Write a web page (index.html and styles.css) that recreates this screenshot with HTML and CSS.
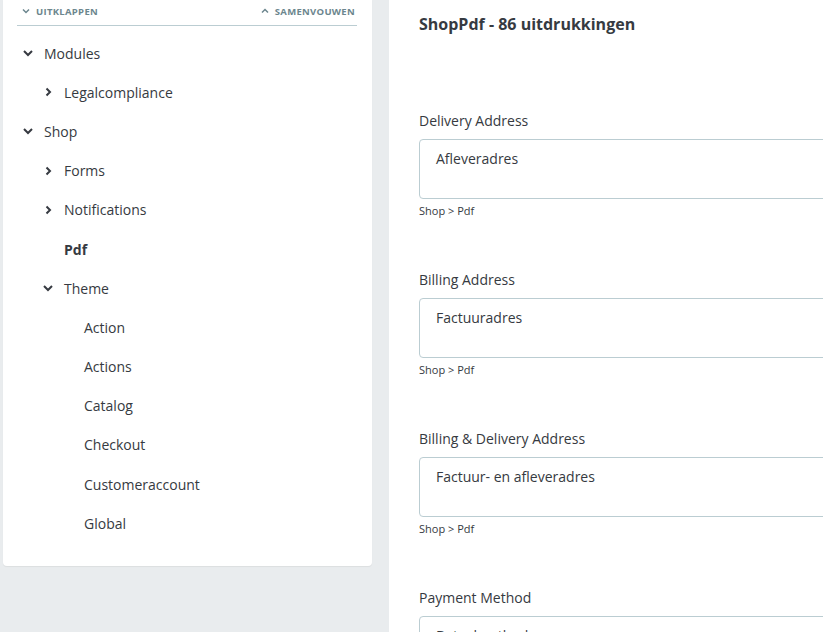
FILE: index.html
```html
<!DOCTYPE html>
<html lang="nl">
<head>
<meta charset="utf-8">
<title>Vertalingen</title>
<link rel="stylesheet" href="styles.css">
</head>
<body>
<div class="layout">
  <aside class="side">
    <div class="side-head">
      <span class="head-btn"><svg class="head-ico" viewBox="0 0 10 10"><path d="M2 3.5 L5 6.5 L8 3.5" /></svg>Uitklappen</span>
      <span class="head-btn"><svg class="head-ico" viewBox="0 0 10 10"><path d="M2 6.5 L5 3.5 L8 6.5" /></svg>Samenvouwen</span>
    </div>
    <ul class="tree">
      <li class="node lvl0"><svg class="chev" viewBox="0 0 16 16"><path d="M4 6 L8 10 L12 6"/></svg><span>Modules</span></li>
      <li class="node lvl1"><svg class="chev" viewBox="0 0 16 16"><path d="M6.5 4.5 L10 8 L6.5 11.5"/></svg><span>Legalcompliance</span></li>
      <li class="node lvl0"><svg class="chev" viewBox="0 0 16 16"><path d="M4 6 L8 10 L12 6"/></svg><span>Shop</span></li>
      <li class="node lvl1"><svg class="chev" viewBox="0 0 16 16"><path d="M6.5 4.5 L10 8 L6.5 11.5"/></svg><span>Forms</span></li>
      <li class="node lvl1"><svg class="chev" viewBox="0 0 16 16"><path d="M6.5 4.5 L10 8 L6.5 11.5"/></svg><span>Notifications</span></li>
      <li class="node lvl1 active"><span class="spacer"></span><span>Pdf</span></li>
      <li class="node lvl1"><svg class="chev" viewBox="0 0 16 16"><path d="M4 6 L8 10 L12 6"/></svg><span>Theme</span></li>
      <li class="node lvl2"><span class="spacer"></span><span>Action</span></li>
      <li class="node lvl2"><span class="spacer"></span><span>Actions</span></li>
      <li class="node lvl2"><span class="spacer"></span><span>Catalog</span></li>
      <li class="node lvl2"><span class="spacer"></span><span>Checkout</span></li>
      <li class="node lvl2"><span class="spacer"></span><span>Customeraccount</span></li>
      <li class="node lvl2"><span class="spacer"></span><span>Global</span></li>
    </ul>
  </aside>
  <main class="main">
    <h1 class="title">ShopPdf - 86 uitdrukkingen</h1>
    <div class="field">
      <label class="label">Delivery Address</label>
      <textarea class="input" rows="2">Afleveradres</textarea>
      <div class="crumb">Shop &gt; Pdf</div>
    </div>
    <div class="field">
      <label class="label">Billing Address</label>
      <textarea class="input" rows="2">Factuuradres</textarea>
      <div class="crumb">Shop &gt; Pdf</div>
    </div>
    <div class="field">
      <label class="label">Billing &amp; Delivery Address</label>
      <textarea class="input" rows="2">Factuur- en afleveradres</textarea>
      <div class="crumb">Shop &gt; Pdf</div>
    </div>
    <div class="field">
      <label class="label">Payment Method</label>
      <textarea class="input" rows="2">Betaalmethode</textarea>
      <div class="crumb">Shop &gt; Pdf</div>
    </div>
  </main>
</div>
</body>
</html>
```

FILE: styles.css
```css
html, body {
  margin: 0;
  padding: 0;
  height: 100%;
  overflow: hidden;
}
body {
  background: #e9ecee;
  font-family: "Open Sans", "Noto Sans", sans-serif;
  color: #363a41;
  font-size: 14px;
}
.layout {
  display: flex;
  align-items: flex-start;
  gap: 17px;
  padding-left: 3px;
}
.side {
  flex: 0 0 369px;
  background: #fff;
  border-radius: 0 0 4px 4px;
  padding: 0 15px 23px 14px;
  box-sizing: border-box;
  box-shadow: 0 1px 1px rgba(0,0,0,0.06);
}
.side-head {
  display: flex;
  justify-content: space-between;
  align-items: center;
  height: 25px;
  border-bottom: 1px solid #bbcdd2;
  padding: 0 2px 0 4px;
  margin-bottom: 7.5px;
}
.head-btn {
  display: flex;
  align-items: center;
  gap: 5px;
  font-size: 9.5px;
  font-weight: 700;
  text-transform: uppercase;
  letter-spacing: 0.3px;
  color: #6c868e;
  margin-top: -3px;
}
.head-ico {
  width: 10px;
  height: 10px;
  fill: none;
  stroke: #6c868e;
  stroke-width: 1.5;
}
.tree {
  list-style: none;
  margin: 0;
  padding: 0 0 0 3px;
}
.node {
  display: flex;
  align-items: center;
  height: 39.2px;
  line-height: 21px;
}
.lvl1 { padding-left: 20px; }
.lvl2 { padding-left: 40px; }
.chev, .spacer {
  flex: 0 0 16px;
  width: 16px;
  height: 16px;
  margin-right: 8px;
}
.chev {
  fill: none;
  stroke: #363a41;
  stroke-width: 2;
}
.active { font-weight: 700; }
.main {
  flex: 0 0 700px;
  min-height: 700px;
  background: #fff;
  padding: 13px 30px 0 30px;
  box-sizing: border-box;
}
.title {
  margin: 0 0 75px;
  font-size: 16px;
  line-height: 22px;
  font-weight: 700;
  color: #363a41;
}
.field {
  display: flex;
  flex-direction: column;
  margin-bottom: 50.5px;
}
.label {
  font-size: 14px;
  line-height: 21px;
  margin-bottom: 7.5px;
}
.input {
  box-sizing: border-box;
  width: 100%;
  height: 60px;
  border: 1px solid #bbcdd2;
  border-radius: 4px;
  padding: 8px 16px;
  font-family: inherit;
  font-size: 14px;
  line-height: 21px;
  color: #363a41;
  resize: none;
  overflow: hidden;
  margin: 0;
  display: block;
}
.crumb {
  font-size: 11px;
  line-height: 16px;
  margin-top: 4px;
}
```
